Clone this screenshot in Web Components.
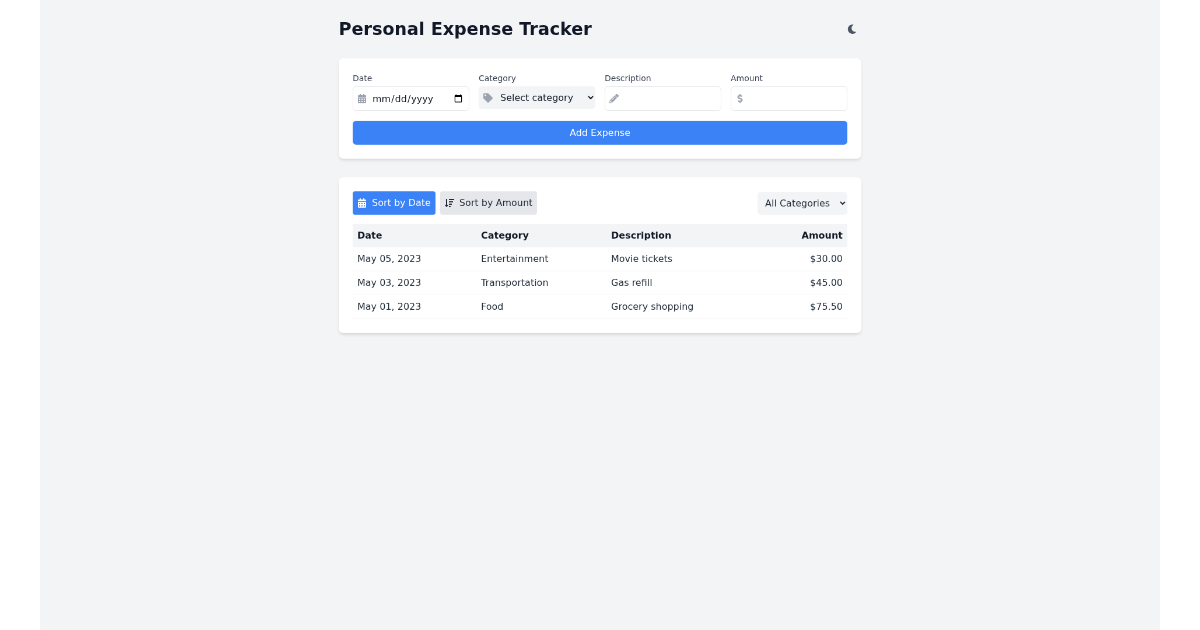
<!DOCTYPE html>
<html lang="en">
<head>
<meta charset="utf-8">
<title>Personal Expense Tracker</title>
<style>
  html, body { margin: 0; height: 100%; background: #fff; }
  body { font-family: "DejaVu Sans", sans-serif; color: #111827; }
</style>
</head>
<body>
<expense-app></expense-app>

<script>
const ICONS = {
  moon: ['0 0 512 512', 'M283.211 512c78.962 0 151.079-35.925 198.857-94.792 7.068-8.708-.639-21.43-11.562-19.35-124.203 23.654-238.262-71.576-238.262-196.954 0-72.222 38.662-138.635 101.498-174.394 9.686-5.512 7.25-20.197-3.756-22.23A258.156 258.156 0 0 0 283.211 0c-141.309 0-256 114.511-256 256 0 141.309 114.511 256 256 256z'],
  calendar: ['0 0 448 512', 'M0 464c0 26.5 21.5 48 48 48h352c26.5 0 48-21.5 48-48V192H0v272zm320-196c0-6.6 5.4-12 12-12h40c6.6 0 12 5.4 12 12v40c0 6.6-5.4 12-12 12h-40c-6.6 0-12-5.4-12-12v-40zm0 128c0-6.6 5.4-12 12-12h40c6.6 0 12 5.4 12 12v40c0 6.6-5.4 12-12 12h-40c-6.6 0-12-5.4-12-12v-40zM192 268c0-6.6 5.4-12 12-12h40c6.6 0 12 5.4 12 12v40c0 6.6-5.4 12-12 12h-40c-6.6 0-12-5.4-12-12v-40zm0 128c0-6.6 5.4-12 12-12h40c6.6 0 12 5.4 12 12v40c0 6.6-5.4 12-12 12h-40c-6.6 0-12-5.4-12-12v-40zM64 268c0-6.6 5.4-12 12-12h40c6.6 0 12 5.4 12 12v40c0 6.6-5.4 12-12 12H76c-6.6 0-12-5.4-12-12v-40zm0 128c0-6.6 5.4-12 12-12h40c6.6 0 12 5.4 12 12v40c0 6.6-5.4 12-12 12H76c-6.6 0-12-5.4-12-12v-40zM400 64h-48V16c0-8.8-7.2-16-16-16h-32c-8.8 0-16 7.2-16 16v48H160V16c0-8.8-7.2-16-16-16h-32c-8.8 0-16 7.2-16 16v48H48C21.5 64 0 85.5 0 112v48h448v-48c0-26.5-21.5-48-48-48z'],
  tag: ['0 0 512 512', 'M0 252.118V48C0 21.49 21.49 0 48 0h204.118a48 48 0 0 1 33.941 14.059l211.882 211.882c18.745 18.745 18.745 49.137 0 67.882L293.823 497.941c-18.745 18.745-49.137 18.745-67.882 0L14.059 286.059A48 48 0 0 1 0 252.118zM112 64c-26.51 0-48 21.49-48 48s21.49 48 48 48 48-21.49 48-48-21.49-48-48-48z'],
  pencil: ['0 0 512 512', 'M497.9 142.1l-46.1 46.1c-4.7 4.7-12.3 4.7-17 0l-111-111c-4.7-4.7-4.7-12.3 0-17l46.1-46.1c18.7-18.7 49.1-18.7 67.9 0l60.1 60.1c18.8 18.7 18.8 49.1 0 67.9zM284.2 99.8L21.6 362.4.4 483.9c-2.9 16.4 11.4 30.6 27.8 27.8l121.5-21.3 262.6-262.6c4.7-4.7 4.7-12.3 0-17l-111-111c-4.8-4.7-12.4-4.7-17.1 0zM124.1 339.9c-5.5-5.5-5.5-14.3 0-19.8l154-154c5.5-5.5 14.3-5.5 19.8 0s5.5 14.3 0 19.8l-154 154c-5.5 5.5-14.3 5.5-19.8 0zM88 424h48v36.3l-64.5 11.3-31.1-31.1L51.7 376H88v48z'],
  dollar: ['0 0 288 512', 'M209.2 233.4l-108-31.6C88.7 198.2 80 186.5 80 173.5c0-16.3 13.2-29.5 29.5-29.5h66.3c12.2 0 24.2 3.7 34.2 10.5 6.1 4.1 14.3 3.1 19.5-2l34.8-34c7.1-6.9 6.1-18.4-1.8-24.5C238 74.8 207.4 64.1 176 64V16c0-8.8-7.2-16-16-16h-32c-8.8 0-16 7.2-16 16v48h-2.5C45.8 64-5.4 118.7.5 183.6c4.2 46.1 39.4 83.6 83.8 96.6l102.5 30c12.5 3.7 21.2 15.3 21.2 28.3 0 16.3-13.2 29.5-29.5 29.5h-66.3C100 368 88 364.3 78 357.5c-6.1-4.1-14.3-3.1-19.5 2l-34.8 34c-7.1 6.9-6.1 18.4 1.8 24.5 24.5 19.2 55.1 29.9 86.5 30v48c0 8.8 7.2 16 16 16h32c8.8 0 16-7.2 16-16v-48.2c46.6-.9 90.3-28.6 105.7-72.7 21.5-61.6-14.6-124.8-72.5-141.7z'],
  sort: ['0 0 512 512', 'M304 416h-64a16 16 0 0 0-16 16v32a16 16 0 0 0 16 16h64a16 16 0 0 0 16-16v-32a16 16 0 0 0-16-16zm-128-64h-48V48a16 16 0 0 0-16-16H80a16 16 0 0 0-16 16v304H16c-14.19 0-21.37 17.24-11.29 27.31l80 96a16 16 0 0 0 22.62 0l80-96C197.35 369.26 190.22 352 176 352zm256-192H240a16 16 0 0 0-16 16v32a16 16 0 0 0 16 16h192a16 16 0 0 0 16-16v-32a16 16 0 0 0-16-16zm-64 128H240a16 16 0 0 0-16 16v32a16 16 0 0 0 16 16h128a16 16 0 0 0 16-16v-32a16 16 0 0 0-16-16zM496 32H240a16 16 0 0 0-16 16v32a16 16 0 0 0 16 16h256a16 16 0 0 0 16-16V48a16 16 0 0 0-16-16z']
};

const icon = (name, size) => {
  const [box, d] = ICONS[name];
  return `<svg width="${size}" height="${size}" viewBox="${box}" fill="currentColor" aria-hidden="true"><path d="${d}"/></svg>`;
};

const FIELD_BASE = `
  box-sizing: border-box;
  width: 100%;
  font: 16px "DejaVu Sans", sans-serif;
  color: #111827;
  border-radius: 6px;
`;

class AppHeader extends HTMLElement {
  constructor() {
    super();
    this.attachShadow({ mode: 'open' }).innerHTML = `
      <style>
        :host { display: flex; justify-content: space-between; align-items: center; height: 36px; margin-bottom: 32px; }
        h1 { margin: 0; font-size: 30px; line-height: 36px; font-weight: 700; color: #111827; }
        button { display: flex; padding: 8px; border: 0; background: none; color: #4b5563; }
      </style>
      <h1><slot></slot></h1>
      <button aria-label="Toggle theme">${icon('moon', 16)}</button>
    `;
  }
}

class AppCard extends HTMLElement {
  constructor() {
    super();
    this.attachShadow({ mode: 'open' }).innerHTML = `
      <style>
        :host {
          display: block;
          padding: 24px;
          background: #fff;
          border-radius: 8px;
          box-shadow: 0 4px 6px -1px rgba(0,0,0,.1), 0 2px 4px -2px rgba(0,0,0,.1);
        }
      </style>
      <slot></slot>
    `;
  }
}

class FormField extends HTMLElement {
  constructor() {
    super();
    this.attachShadow({ mode: 'open' }).innerHTML = `
      <style>
        :host { display: block; min-width: 0; }
        label { display: block; font-size: 14px; line-height: 20px; margin-bottom: 4px; color: #374151; }
        .wrap { position: relative; }
        .icon { position: absolute; left: 8px; top: 13px; display: flex; color: #9ca3af; }
        :host([type=select]) .icon { top: 11.5px; }
        .control { display: block; }
        input, select { ${FIELD_BASE} display: block; }
        input {
          height: 42px;
          padding: 8px 8px 8px 32px;
          background: #fff;
          border: 1px solid #e5e7eb;
          outline: none;
        }
        select {
          height: 39px;
          padding: 0 6px 0 33px;
          background: #f3f4f6;
          border: 0;
        }
      </style>
      <label></label>
      <div class="wrap"><span class="control"></span><span class="icon"></span></div>
    `;
    const root = this.shadowRoot;
    root.querySelector('label').textContent = this.getAttribute('label');
    root.querySelector('.icon').innerHTML = icon(this.getAttribute('icon'), 16);
    const type = this.getAttribute('type');
    const host = root.querySelector('.control');
    if (type === 'select') {
      host.innerHTML = '<select><option>Select category</option></select>';
    } else {
      host.innerHTML = `<input type="${type}">`;
    }
  }
}

class ExpenseForm extends HTMLElement {
  constructor() {
    super();
    this.attachShadow({ mode: 'open' }).innerHTML = `
      <style>
        :host { display: block; }
        .grid { display: grid; grid-template-columns: repeat(4, 1fr); gap: 16px; margin-bottom: 17px; }
        button {
          display: block;
          width: 100%;
          height: 41px;
          padding: 0;
          border: 0;
          border-radius: 6px;
          background: #3b82f6;
          color: #fff;
          font: 16px "DejaVu Sans", sans-serif;
        }
      </style>
      <app-card>
        <div class="grid">
          <form-field label="Date" icon="calendar" type="date"></form-field>
          <form-field label="Category" icon="tag" type="select"></form-field>
          <form-field label="Description" icon="pencil" type="text"></form-field>
          <form-field label="Amount" icon="dollar" type="number"></form-field>
        </div>
        <button>Add Expense</button>
      </app-card>
    `;
  }
}

class SortButton extends HTMLElement {
  constructor() {
    super();
    this.attachShadow({ mode: 'open' }).innerHTML = `
      <style>
        :host { display: block; }
        button {
          display: flex;
          align-items: center;
          gap: 9px;
          height: 40px;
          padding: 0 8px;
          border: 0;
          border-radius: 4px;
          background: #e5e7eb;
          color: #1f2937;
          font: 16px "DejaVu Sans", sans-serif;
        }
        span { margin-bottom: 2px; }
        :host([active]) button { background: #3b82f6; color: #fff; }
      </style>
      <button>${icon(this.getAttribute('icon'), 16)}<span><slot></slot></span></button>
    `;
  }
}

const ROWS = [
  ['May 05, 2023', 'Entertainment', 'Movie tickets', '$30.00'],
  ['May 03, 2023', 'Transportation', 'Gas refill', '$45.00'],
  ['May 01, 2023', 'Food', 'Grocery shopping', '$75.50']
];

class ExpenseTable extends HTMLElement {
  constructor() {
    super();
    const body = ROWS.map(r => `<tr>${r.map(c => `<td>${c}</td>`).join('')}</tr>`).join('');
    this.attachShadow({ mode: 'open' }).innerHTML = `
      <style>
        :host { display: block; }
        table { width: 100%; border-collapse: collapse; table-layout: fixed; font-size: 16px; }
        th, td { padding: 8px; line-height: 24px; text-align: left; color: #1f2937; }
        th { background: #f3f4f6; font-weight: 700; color: #111827; }
        td { border-bottom: 1px solid #f3f4f6; }
        th:last-child, td:last-child { text-align: right; }
        col.a { width: 212px; } col.b { width: 223px; } col.c { width: 223px; }
      </style>
      <table>
        <colgroup><col class="a"><col class="b"><col class="c"><col></colgroup>
        <thead><tr><th>Date</th><th>Category</th><th>Description</th><th>Amount</th></tr></thead>
        <tbody>${body}</tbody>
      </table>
    `;
  }
}

class ExpenseList extends HTMLElement {
  constructor() {
    super();
    this.attachShadow({ mode: 'open' }).innerHTML = `
      <style>
        :host { display: block; }
        .bar { display: flex; justify-content: space-between; align-items: flex-end; height: 40px; margin-bottom: 16px; }
        .sorts { display: flex; gap: 8px; }
        select {
          ${FIELD_BASE}
          width: 154px;
          height: 39px;
          padding: 0 2px 1px 9px;
          border: 0;
          background: #f3f4f6;
          color: #1f2937;
        }
      </style>
      <app-card>
        <div class="bar">
          <div class="sorts">
            <sort-button icon="calendar" active>Sort by Date</sort-button>
            <sort-button icon="sort">Sort by Amount</sort-button>
          </div>
          <select><option>All Categories</option></select>
        </div>
        <expense-table></expense-table>
      </app-card>
    `;
  }
}

// the reference is a 1920 wide layout shown at 7/12
class ExpenseApp extends HTMLElement {
  constructor() {
    super();
    this.attachShadow({ mode: 'open' }).innerHTML = `
      <style>
        :host { display: block; height: 630px; overflow: hidden; }
        .stage { width: 1120px; height: 630px; margin: 0 auto; overflow: hidden; background: #f3f4f6; }
        .page { box-sizing: border-box; width: 1920px; height: 1080px; padding: 32px 0; transform: scale(calc(7 / 12)); transform-origin: 0 0; will-change: transform; }
        .inner { width: 896px; margin: 0 auto; }
        expense-form { margin-bottom: 32px; }
      </style>
      <div class="stage">
        <div class="page">
          <div class="inner">
            <app-header>Personal Expense Tracker</app-header>
            <expense-form></expense-form>
            <expense-list></expense-list>
          </div>
        </div>
      </div>
    `;
  }
}

customElements.define('app-header', AppHeader);
customElements.define('app-card', AppCard);
customElements.define('form-field', FormField);
customElements.define('expense-form', ExpenseForm);
customElements.define('sort-button', SortButton);
customElements.define('expense-table', ExpenseTable);
customElements.define('expense-list', ExpenseList);
customElements.define('expense-app', ExpenseApp);
</script>
</body>
</html>
